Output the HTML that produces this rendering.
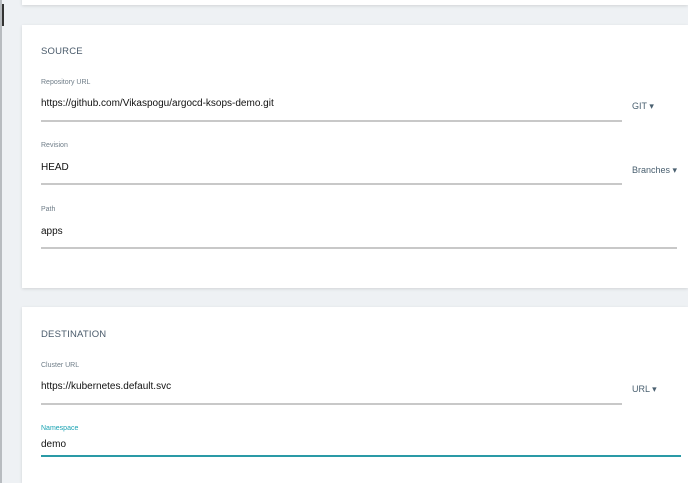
<!DOCTYPE html>
<html style="overflow:hidden"><head><style>
html,body{margin:0;width:688px;height:483px;overflow:hidden}
body{background:#eef1f4;position:relative;font-family:"Liberation Sans",sans-serif;}
.a{position:absolute;white-space:nowrap}
.card{position:absolute;left:22px;width:666px;background:#fff;box-shadow:0 1px 3px rgba(0,0,0,.12)}
.t{font-size:9.5px;color:#4a5b6b;letter-spacing:.2px}
.l{font-size:7px;color:#6f7d88}
.v{font-size:10px;color:#111}
.u{position:absolute;height:1.5px;background:#c8c8c8}
.d{font-size:9px;color:#4a6070}
</style></head><body>
<div class="a" style="left:0;top:0;width:2px;height:483px;background:#b8bcc0"></div>
<div class="a" style="left:2px;top:4px;width:2px;height:22px;background:#333"></div>
<div class="card" style="top:-10px;height:15px"></div>
<div class="card" style="top:25px;height:263px"></div>
<div class="card" style="top:307px;height:176px"></div>

<div class="a t" style="left:41px;top:46px">SOURCE</div>
<div class="a l" style="left:41px;top:79px">Repository URL</div>
<div class="a v" style="left:41px;top:98px">https://github.com/Vikaspogu/argocd-ksops-demo.git</div>
<div class="u" style="left:41px;top:120px;width:581px"></div>
<div class="a d" style="left:632px;top:101px">GIT ▾</div>

<div class="a l" style="left:41px;top:142px">Revision</div>
<div class="a v" style="left:41px;top:162px">HEAD</div>
<div class="u" style="left:41px;top:183px;width:581px"></div>
<div class="a d" style="left:632px;top:165px">Branches ▾</div>

<div class="a l" style="left:41px;top:206px">Path</div>
<div class="a v" style="left:41px;top:226px">apps</div>
<div class="u" style="left:41px;top:247px;width:636px"></div>

<div class="a t" style="left:41px;top:329px">DESTINATION</div>
<div class="a l" style="left:41px;top:362px">Cluster URL</div>
<div class="a v" style="left:41px;top:381px">https://kubernetes.default.svc</div>
<div class="u" style="left:41px;top:403px;width:581px"></div>
<div class="a d" style="left:632px;top:384px">URL ▾</div>

<div class="a l" style="left:41px;top:425px;color:#1aa3b3">Namespace</div>
<div class="a v" style="left:41px;top:439px">demo</div>
<div class="u" style="left:41px;top:455px;width:640px;height:2px;background:#2a9aa6"></div>
</body></html>
